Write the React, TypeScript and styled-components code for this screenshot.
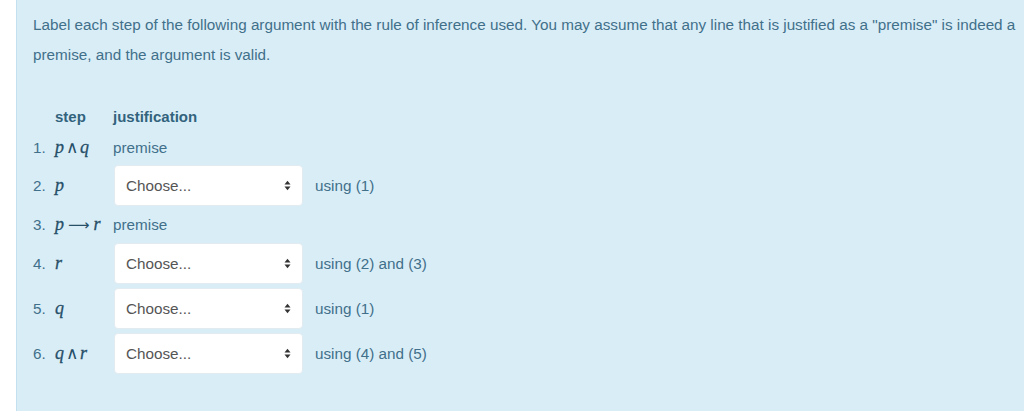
import React from "react";
import styled, { createGlobalStyle } from "styled-components";

const GlobalStyle = createGlobalStyle`
  html, body { margin: 0; padding: 0; background: #ffffff; }
  body { font-family: "Liberation Sans", Arial, sans-serif; }
`;

const Page = styled.div`
  padding-left: 16px;
  height: 411px;
  overflow: hidden;
`;

const Panel = styled.section`
  background: #d9edf7;
  border-left: 1px solid #c3e0ee;
  min-height: 411px;
  box-sizing: border-box;
  padding: 10px 6px 0 16px;
  color: #41708a;
  font-size: 15.25px;
`;

const Intro = styled.p`
  margin: 0;
  line-height: 30px;
`;

const Table = styled.div`
  margin-top: 30px;
  display: flex;
  flex-direction: column;
`;

const Row = styled.div<{ $h: number }>`
  display: grid;
  grid-template-columns: 22px 58px max-content max-content;
  align-items: center;
  height: ${(p) => p.$h}px;
`;

const HeadCell = styled.div`
  font-weight: bold;
  font-size: 15px;
  color: #32637d;
`;

const Num = styled.span`
  font-size: 15.25px;
`;

const Math = styled.span`
  font-family: "Liberation Serif", "Times New Roman", serif;
  font-style: italic;
  font-size: 18px;
  color: #264f68;
  -webkit-text-stroke: 0.3px #264f68;
  white-space: nowrap;
  display: inline-flex;
  align-items: center;
`;

const Op = styled.span`
  font-family: "Liberation Serif", serif;
  font-style: normal;
  -webkit-text-stroke: 0;
  font-size: 17px;
  margin: 0 2px;
`;

const Arrow = styled.span`
  font-family: "DejaVu Sans", sans-serif;
  font-style: normal;
  -webkit-text-stroke: 0;
  font-size: 15px;
  margin: 0 4px;
`;

const Text = styled.span`
  font-size: 15.25px;
`;

const SelectBox = styled.div`
  box-sizing: border-box;
  width: 189px;
  height: 41px;
  margin-left: 1px;
  background: #ffffff;
  border: 1px solid #e2ebf0;
  border-radius: 4px;
  display: flex;
  align-items: center;
  justify-content: space-between;
  padding: 0 11px 0 11px;
  color: #555555;
  font-size: 15.25px;
`;

const Using = styled.span`
  margin-left: 12px;
  font-size: 15.25px;
`;

const Caret = () => (
  <svg width="7" height="11" viewBox="0 0 7 11">
    <path d="M0.5 4.6 L3.5 0.8 L6.5 4.6 Z" fill="#333" />
    <path d="M0.5 6.4 L3.5 10.2 L6.5 6.4 Z" fill="#333" />
  </svg>
);

const Select = () => (
  <SelectBox>
    <span>Choose...</span>
    <Caret />
  </SelectBox>
);

type Step = {
  n: number;
  math: React.ReactNode;
  premise?: boolean;
  using?: string;
};

const steps: Step[] = [
  { n: 1, math: <>p<Op>∧</Op>q</>, premise: true },
  { n: 2, math: <>p</>, using: "using (1)" },
  { n: 3, math: <>p<Arrow>⟶</Arrow>r</>, premise: true },
  { n: 4, math: <>r</>, using: "using (2) and (3)" },
  { n: 5, math: <>q</>, using: "using (1)" },
  { n: 6, math: <>q<Op>∧</Op>r</>, using: "using (4) and (5)" },
];

export default function App() {
  return (
    <>
      <GlobalStyle />
      <Page>
        <Panel>
          <Intro>
            Label each step of the following argument with the rule of inference used. You may assume that any line that is justified as a "premise" is indeed a premise, and the argument is valid.
          </Intro>
          <Table>
            <Row $h={32}>
              <span />
              <HeadCell>step</HeadCell>
              <HeadCell>justification</HeadCell>
              <span />
            </Row>
            {steps.map((s, i) => (
              <Row key={s.n} $h={s.premise ? (i === 0 ? 31 : 33) : 45}>
                <Num>{s.n}.</Num>
                <Math>{s.math}</Math>
                {s.premise ? <Text>premise</Text> : <Select />}
                {s.using ? <Using>{s.using}</Using> : <span />}
              </Row>
            ))}
          </Table>
        </Panel>
      </Page>
    </>
  );
}
